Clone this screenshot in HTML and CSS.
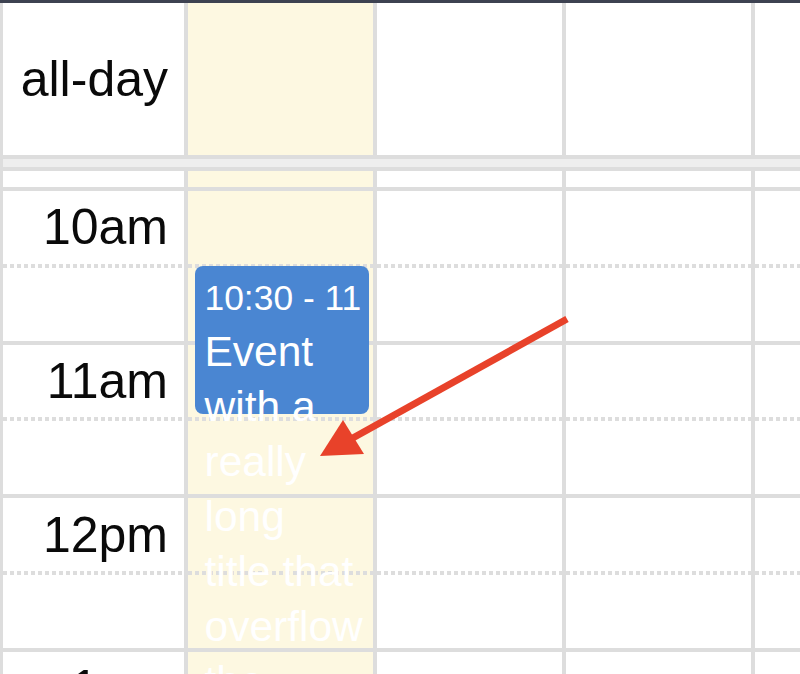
FILE: index.html
```html
<!DOCTYPE html>
<html>
	<head>
		<meta charset="UTF-8">
		<title>Week</title>
		<link rel="stylesheet" href="styles.css">
	</head>
	<body>
		<div class="topbar"></div>
		<div class="cal">
			<div class="row allday">
				<div class="axis">all-day</div>
				<div class="cell today"></div>
				<div class="cell"></div>
				<div class="cell"></div>
				<div class="cell"></div>
			</div>
			<div class="divider"></div>
			<div class="scroller">
				<div class="slats">
					<div class="row slat minor">
						<div class="axis"></div>
						<div class="cell today"></div><div class="cell"></div><div class="cell"></div><div class="cell"></div>
					</div>
					<div class="row slat major">
						<div class="axis">10am</div>
						<div class="cell today"></div><div class="cell"></div><div class="cell"></div><div class="cell"></div>
					</div>
					<div class="row slat minor">
						<div class="axis"></div>
						<div class="cell today"></div><div class="cell"></div><div class="cell"></div><div class="cell"></div>
					</div>
					<div class="row slat major">
						<div class="axis">11am</div>
						<div class="cell today"></div><div class="cell"></div><div class="cell"></div><div class="cell"></div>
					</div>
					<div class="row slat minor">
						<div class="axis"></div>
						<div class="cell today"></div><div class="cell"></div><div class="cell"></div><div class="cell"></div>
					</div>
					<div class="row slat major">
						<div class="axis">12pm</div>
						<div class="cell today"></div><div class="cell"></div><div class="cell"></div><div class="cell"></div>
					</div>
					<div class="row slat minor">
						<div class="axis"></div>
						<div class="cell today"></div><div class="cell"></div><div class="cell"></div><div class="cell"></div>
					</div>
					<div class="row slat major">
						<div class="axis">1pm</div>
						<div class="cell today"></div><div class="cell"></div><div class="cell"></div><div class="cell"></div>
					</div>
					<div class="row slat minor">
						<div class="axis"></div>
						<div class="cell today"></div><div class="cell"></div><div class="cell"></div><div class="cell"></div>
					</div>
				</div>

				<a class="event" href="javascript:;" style="top:95px;height:148px">
					<div class="ev-time">10:30 - 11</div>
					<div class="ev-title">Event with a really long title that overflow the event box</div>
				</a>
			</div>
		</div>

		<svg class="arrow" width="800" height="674" viewBox="0 0 800 674">
			<line x1="567" y1="319" x2="351" y2="439" stroke="#e8422a" stroke-width="7"/>
			<polygon points="320,456 343,420 364,454" fill="#e8422a"/>
		</svg>
	</body>
</html>
```

FILE: styles.css
```css
html,body {
	margin: 0;
	padding: 0;
	height: 100%;
	overflow: hidden;
}
body {
	position: relative;
	background-color: #fff;
	color: #0a0a0a;
	font-family: "Liberation Sans", Arial, sans-serif;
	font-size: 50px;
}
a {
	text-decoration: none;
}

.topbar {
	height: 3px;
	background-color: #3d4251;
}
.cal {
	width: 1000px;
	border-left: 3px solid #ddd;
}
.row {
	display: grid;
	grid-template-columns: 181px repeat(4, 189px);
}
.cell {
	border-left: 4px solid #ddd;
}
.today {
	background-color: #fdf8e1;
}
.axis {
	display: flex;
	align-items: center;
	justify-content: flex-end;
	padding-right: 16px;
	white-space: nowrap;
}

.allday {
	height: 152px;
	border-bottom: 4px solid #ddd;
}
.divider {
	height: 8px;
	background-color: #eee;
	border-bottom: 4px solid #ddd;
}

.scroller {
	position: relative;
	height: 503px;
	overflow: hidden;
}
.slats {
	margin-top: -60.8px;
}
.slat {
	height: 76.8px;
}
.slat > div {
	box-sizing: border-box;
}
.slat.major > div {
	border-top: 4px solid #ddd;
}
.slat.minor > div {
	padding-top: 4px;
	background-image: repeating-linear-gradient(90deg, #ddd 0, #ddd 4px, transparent 4px, transparent 7px);
	background-size: 100% 4px;
	background-repeat: no-repeat;
}

.event {
	position: absolute;
	left: 192px;
	width: 174px;
	box-sizing: border-box;
	padding: 6px 11px 0 9.5px;
	background-color: #4a86d2;
	border-radius: 8px;
	color: #fff;
	font-size: 42.5px;
}
.event .ev-time {
	font-size: 35.4px;
	line-height: 52px;
	white-space: nowrap;
}
.event .ev-title {
	line-height: 55px;
}

.arrow {
	position: absolute;
	top: 0;
	left: 0;
	pointer-events: none;
}
```
